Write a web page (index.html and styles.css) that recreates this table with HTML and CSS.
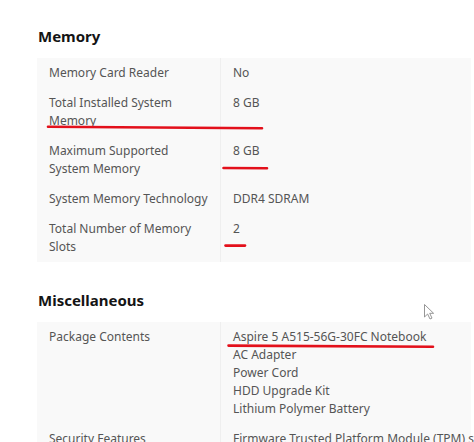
FILE: index.html
```html
<!DOCTYPE html>
<html>
<head>
<meta charset="utf-8">
<link rel="stylesheet" href="styles.css">
</head>
<body>
<div class="page">
  <section class="spec">
    <h2 class="spec-title">Memory</h2>
    <div class="spec-table">
      <div class="spec-row"><div class="spec-label">Memory Card Reader</div><div class="spec-value">No</div></div>
      <div class="spec-row"><div class="spec-label">Total Installed System Memory</div><div class="spec-value">8 GB</div></div>
      <div class="spec-row"><div class="spec-label">Maximum Supported System Memory</div><div class="spec-value">8 GB</div></div>
      <div class="spec-row"><div class="spec-label">System Memory Technology</div><div class="spec-value">DDR4 SDRAM</div></div>
      <div class="spec-row"><div class="spec-label">Total Number of Memory Slots</div><div class="spec-value">2</div></div>
    </div>
  </section>
  <section class="spec">
    <h2 class="spec-title">Miscellaneous</h2>
    <div class="spec-table">
      <div class="spec-row"><div class="spec-label">Package Contents</div><div class="spec-value">Aspire 5 A515-56G-30FC Notebook<br>AC Adapter<br>Power Cord<br>HDD Upgrade Kit<br>Lithium Polymer Battery</div></div>
      <div class="spec-row"><div class="spec-label">Security Features</div><div class="spec-value">Firmware Trusted Platform Module (TPM) solution</div></div>
    </div>
  </section>
  <svg class="marks" width="474" height="442" viewBox="0 0 474 442">
    <g fill="none" stroke="#e3101b" stroke-width="2.6" stroke-linecap="round">
      <path d="M48 126.8 Q150 127.6 262 128.2"/>
      <path d="M223.5 168 L267 168.2"/>
      <path d="M225.5 245.6 L245 245.6"/>
      <path d="M228.5 345.6 Q330 346.4 433 346.8"/>
    </g>
    <path d="M424.5 304.5 L424.5 317 L427.6 314 L430 319 L432 318.1 L429.7 313.3 L433.6 313.3 Z" fill="#fff" stroke="#8a8a8a" stroke-width="0.9" stroke-linejoin="round"/>
  </svg>
</div>
</body>
</html>
```
FILE: styles.css
```css
html, body {
  margin: 0;
  padding: 0;
  background: #ffffff;
}
.page {
  position: relative;
  width: 474px;
  height: 442px;
  overflow: hidden;
  box-sizing: border-box;
  padding: 24px 3px 0 37px;
  font-family: "Noto Sans", "Open Sans", sans-serif;
}
.spec + .spec {
  margin-top: 26px;
}
.spec-title {
  margin: 0 0 10px 1px;
  font-size: 15px;
  line-height: 24px;
  font-weight: 700;
  color: #141414;
}
.spec-table {
  background: #f9f9f9;
}
.spec-row {
  display: grid;
  grid-template-columns: 184px 1fr;
}
.spec-label,
.spec-value {
  padding: 6px 12px;
  font-size: 12px;
  line-height: 18px;
  color: #555555;
}
.spec-label {
  border-right: 1px solid #efefef;
  padding-right: 11px;
}
.spec-value {
  white-space: nowrap;
}
.marks {
  position: absolute;
  left: 0;
  top: 0;
  pointer-events: none;
}
```
